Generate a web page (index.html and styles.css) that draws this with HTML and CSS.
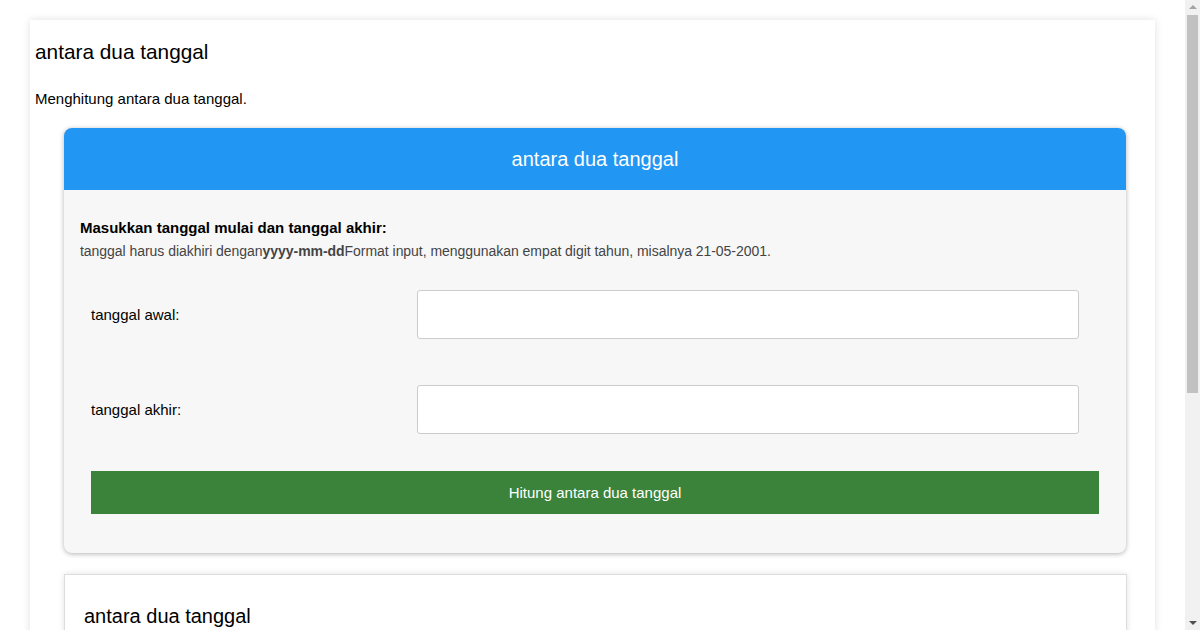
FILE: index.html
```html
<!DOCTYPE html>
<html lang="id">
<head>
  <meta charset="UTF-8">
  <meta name="viewport" content="width=device-width, initial-scale=1.0">
  <title>antara dua tanggal</title>
  <link rel="stylesheet" href="styles.css">
</head>
<body>
  <div class="page">
    <h1 class="page-title">antara dua tanggal</h1>
    <p class="page-desc">Menghitung antara dua tanggal.</p>

    <div class="calc">
      <div class="calc-header">antara dua tanggal</div>
      <div class="calc-body">
        <p class="intro">Masukkan tanggal mulai dan tanggal akhir:</p>
        <p class="hint">tanggal harus diakhiri dengan<b>yyyy-mm-dd</b>Format input, menggunakan empat digit tahun, misalnya 21-05-2001.</p>

        <div class="row">
          <label for="start">tanggal awal:</label>
          <input type="text" id="start">
        </div>
        <div class="row">
          <label for="end">tanggal akhir:</label>
          <input type="text" id="end">
        </div>

        <button class="btn-calc">Hitung antara dua tanggal</button>
      </div>
    </div>

    <div class="result">
      <h2>antara dua tanggal</h2>
    </div>
  </div>

  <!-- scrollbar like the one in the screenshot -->
  <div class="fake-scroll">
    <span class="arrow up"></span>
    <span class="thumb"></span>
    <span class="arrow down"></span>
  </div>
</body>
</html>
```

FILE: styles.css
```css
html, body {
  margin: 0;
  padding: 0;
  background: #fff;
  font-family: "Liberation Sans", Arial, sans-serif;
  color: #000;
}

.page {
  margin: 20px 45px 20px 30px;
  padding: 1px 5px 30px 5px;
  background: #fff;
  box-shadow: 0 0 8px rgba(0,0,0,0.12);
}

.page-title {
  margin: 19px 0 0 0;
  font-size: 20.8px;
  font-weight: normal;
  line-height: 24px;
}

.page-desc {
  margin: 26px 0 0 0;
  font-size: 15px;
  line-height: 18px;
}

.calc {
  margin: 20px 24px 0 29px;
  border-radius: 8px;
  background: #f7f7f7;
  box-shadow: 0 1px 5px rgba(0,0,0,0.3);
  overflow: hidden;
}

.calc-header {
  height: 62px;
  line-height: 62px;
  background: #2196f3;
  color: #fff;
  text-align: center;
  font-size: 20px;
}

.calc-body {
  padding: 28px 27px 39px 16px;
}

.intro {
  margin: 0;
  font-size: 15px;
  font-weight: bold;
  line-height: 20px;
}

.hint {
  margin: 3px 0 0 0;
  font-size: 14px;
  line-height: 20px;
  color: #444;
  letter-spacing: -0.04px;
}

.row {
  display: flex;
  align-items: center;
  margin: 0 20px 0 11px;
  height: 49px;
}

.row:first-of-type {
  margin-top: 29px;
}

.row + .row {
  margin-top: 46px;
}

.row label {
  width: 326px;
  font-size: 15px;
  padding-bottom: 1px;
}

.row input {
  flex: 1;
  height: 49px;
  box-sizing: border-box;
  border: 1px solid #ccc;
  border-radius: 3px;
  background: #fff;
  font-size: 15px;
}

.btn-calc {
  display: block;
  width: calc(100% - 11px);
  margin: 37px 0 0 11px;
  height: 43px;
  border: none;
  background: #3b833a;
  color: #fff;
  font-family: "Liberation Sans", Arial, sans-serif;
  font-size: 15px;
}

.result {
  margin: 21px 23px 0 29px;
  padding: 29px 19px 360px 19px;
  border: 1px solid #ddd;
  background: #fff;
  box-shadow: 0 0 6px rgba(0,0,0,0.12);
}

.result h2 {
  margin: 0;
  font-size: 20px;
  font-weight: normal;
  line-height: 24px;
}

.fake-scroll {
  position: fixed;
  top: 0;
  right: 0;
  width: 15px;
  height: 100%;
  background: #f1f1f1;
}

.fake-scroll .thumb {
  position: absolute;
  top: 15px;
  left: 2px;
  width: 11px;
  height: 378px;
  background: #c1c1c1;
}

.fake-scroll .arrow {
  position: absolute;
  left: 4px;
  width: 0;
  height: 0;
  border-left: 4px solid transparent;
  border-right: 4px solid transparent;
}

.fake-scroll .up {
  top: 5px;
  border-bottom: 4px solid #a3a3a3;
}

.fake-scroll .down {
  bottom: 5px;
  border-top: 4px solid #505050;
}
```
